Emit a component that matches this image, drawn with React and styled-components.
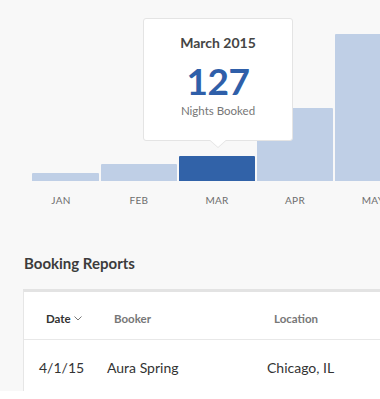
import styled, { createGlobalStyle } from "styled-components";

const GlobalStyle = createGlobalStyle`
  body {
    margin: 0;
    background: #ffffff;
    font-family: Lato, "Open Sans", sans-serif;
  }
`;

const Page = styled.div`
  height: 391px;
  background: #f8f8f8;
  overflow: hidden;
`;

const Chart = styled.div`
  position: relative;
`;

const Bars = styled.div`
  display: flex;
  align-items: flex-end;
  height: 181px;
  padding-left: 22px;
`;

const Column = styled.div`
  width: 78px;
  flex-shrink: 0;
  display: flex;
  align-items: flex-end;
  height: 100%;
`;

const Bar = styled.div`
  flex: 1;
  height: ${(p) => p.h}px;
  margin: 0 1px 0 ${(p) => (p.clip ? 10 : 1)}px;
  background: ${(p) => (p.active ? "#3162a8" : "#bfcfe6")};
  border-radius: 1px 1px 0 0;
`;

const Labels = styled.div`
  display: flex;
  padding-left: 22px;
  margin-top: 14px;
`;

const Label = styled.div`
  width: 78px;
  flex-shrink: 0;
  text-align: center;
  font-size: 10px;
  line-height: 10px;
  color: #6d6d6d;
  letter-spacing: 0.3px;
`;

const Tooltip = styled.div`
  position: absolute;
  left: 143px;
  top: 18px;
  width: 150px;
  height: 123px;
  box-sizing: border-box;
  background: #fff;
  border: 1px solid #e4e4e4;
  border-radius: 3px;
  display: flex;
  flex-direction: column;
  align-items: center;
  padding-top: 16px;

  &::before,
  &::after {
    content: "";
    position: absolute;
    left: 50%;
    transform: translateX(-50%);
    border-style: solid;
    border-color: transparent;
  }
  &::before {
    top: 100%;
    border-width: 8px 9px 0 9px;
    border-top-color: #e4e4e4;
  }
  &::after {
    top: calc(100% - 1px);
    border-width: 8px 9px 0 9px;
    border-top-color: #fff;
  }
`;

const TipTitle = styled.div`
  font-size: 14px;
  font-weight: 700;
  color: #454545;
  line-height: 16px;
`;

const TipValue = styled.div`
  font-size: 37px;
  font-weight: 700;
  color: #2f5fa9;
  line-height: 40px;
  margin-top: 10px;
  letter-spacing: -0.5px;
`;

const TipCaption = styled.div`
  font-size: 11.5px;
  color: #767676;
  line-height: 14px;
  margin-top: 3px;
`;

const Heading = styled.h2`
  margin: 49px 0 17px 24px;
  font-size: 15px;
  line-height: 18px;
  font-weight: 700;
  color: #3c3c3c;
`;

const Card = styled.div`
  margin-left: 23px;
  background: #fff;
  border-top: 3px solid #e3e3e3;
  border-left: 1px solid #e6e6e6;
`;

const Row = styled.div`
  display: grid;
  grid-template-columns: 68px 160px 1fr;
  align-items: center;
  height: ${(p) => (p.head ? 47 : 51)}px;
  border-bottom: ${(p) => (p.head ? "1px solid #e8e8e8" : "none")};
`;

const HeadCell = styled.div`
  padding-left: 22px;
  padding-top: 6px;
  font-size: 11.5px;
  font-weight: 700;
  color: ${(p) => (p.sorted ? "#333" : "#777")};
  display: flex;
  align-items: center;
  gap: 3px;
`;

const Cell = styled.div`
  padding-left: 15px;
  padding-top: 4px;
  font-size: 14px;
  color: #333;
`;

const months = [
  { m: "JAN", h: 8, clip: true },
  { m: "FEB", h: 17 },
  { m: "MAR", h: 25, active: true },
  { m: "APR", h: 73 },
  { m: "MAY", h: 147 },
];

export default function App() {
  return (
    <Page>
      <GlobalStyle />
      <Chart>
        <Bars>
          {months.map((d) => (
            <Column key={d.m}>
              <Bar h={d.h} clip={d.clip} active={d.active} />
            </Column>
          ))}
        </Bars>
        <Labels>
          {months.map((d) => (
            <Label key={d.m}>{d.m}</Label>
          ))}
        </Labels>
        <Tooltip>
          <TipTitle>March 2015</TipTitle>
          <TipValue>127</TipValue>
          <TipCaption>Nights Booked</TipCaption>
        </Tooltip>
      </Chart>
      <Heading>Booking Reports</Heading>
      <Card>
        <Row head>
          <HeadCell sorted>
            Date
            <svg width="8" height="5" viewBox="0 0 8 5">
              <path d="M0.5 0.5 L4 4 L7.5 0.5" fill="none" stroke="#777" strokeWidth="1" />
            </svg>
          </HeadCell>
          <HeadCell>Booker</HeadCell>
          <HeadCell>Location</HeadCell>
        </Row>
        <Row>
          <Cell>4/1/15</Cell>
          <Cell>Aura Spring</Cell>
          <Cell>Chicago, IL</Cell>
        </Row>
      </Card>
    </Page>
  );
}
